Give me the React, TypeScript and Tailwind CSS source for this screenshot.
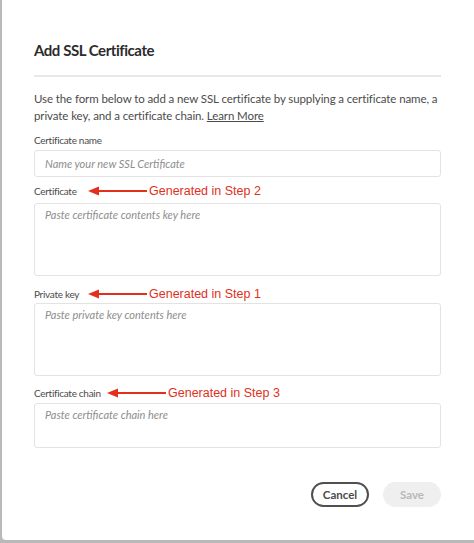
import type { ReactNode } from 'react';

const font = { fontFamily: 'Lato, "Open Sans", sans-serif' };

function Arrow({ width }: { width: number }) {
  return (
    <svg width={width} height="10" viewBox={`0 0 ${width} 10`} className="shrink-0">
      <line x1="8" y1="5" x2={width} y2="5" stroke="#e3301c" strokeWidth="2" />
      <polygon points="0,5 11,0.5 11,9.5" fill="#e3301c" />
    </svg>
  );
}

function Label({ children, note, labelWidth }: { children: ReactNode; note?: string; labelWidth?: number }) {
  return (
    <div className="flex h-[14px] items-center">
      <span className="shrink-0 text-[10px] tracking-[-0.3px] text-[#4b4b4b]" style={labelWidth ? { width: labelWidth } : undefined}>
        {children}
      </span>
      {note && (
        <div className="flex items-center">
          <Arrow width={59} />
          <span className="ml-[2px] text-[12.5px] text-[#e0301c] [font-family:'Liberation_Sans',Arial,sans-serif]">{note}</span>
        </div>
      )}
    </div>
  );
}

const boxCls =
  'block w-full resize-none rounded-[3px] border border-[#e3e3e3] bg-white px-[10px] text-[11px] text-[#4b4b4b] outline-none placeholder:italic placeholder:text-[#8e8e8e]';

export default function App() {
  return (
    <div className="flex h-[543px] w-[474px] flex-col bg-[#b9b9b9]" style={font}>
      <div className="ml-[2px] flex h-[540px] flex-col rounded-bl-[4px] bg-white pl-8 pr-[33px] pt-[40px]">
        <h1 className="text-[15px] font-bold leading-[20px] tracking-[-0.45px] text-[#2c2c2c]">Add SSL Certificate</h1>
        <div className="mt-[15px] h-[2px] bg-[#e8e8e8]" />
        <p className="mt-[13px] text-[11.5px] leading-[17px] tracking-[-0.1px] text-[#4b4b4b]">
          Use the form below to add a new SSL certificate by supplying a certificate name, a private key, and a certificate chain.{' '}
          <a className="text-[#4b4b4b] underline">Learn More</a>
        </p>

        <div className="mt-[9px]">
          <Label>Certificate name</Label>
        </div>
        <input className={`mt-[3px] h-[27px] ${boxCls}`} placeholder="Name your new SSL Certificate" />

        <div className="mt-[7px]">
          <Label note="Generated in Step 2" labelWidth={54}>Certificate</Label>
        </div>
        <textarea className={`mt-[5px] h-[73px] py-[4px] leading-[14px] ${boxCls}`} placeholder="Paste certificate contents key here" />

        <div className="mt-[11px]">
          <Label note="Generated in Step 1" labelWidth={54}>Private key</Label>
        </div>
        <textarea className={`mt-[2px] h-[73px] py-[4px] leading-[14px] ${boxCls}`} placeholder="Paste private key contents here" />

        <div className="mt-[10px]">
          <Label note="Generated in Step 3" labelWidth={73}>Certificate chain</Label>
        </div>
        <textarea className={`mt-[3px] h-[45px] py-[4px] leading-[14px] ${boxCls}`} placeholder="Paste certificate chain here" />

        <div className="mt-[34px] flex justify-end gap-[14px]">
          <button className="h-[25px] w-[58px] rounded-full border-2 border-[#505050] text-[11.5px] font-bold text-[#4b4b4b]">
            Cancel
          </button>
          <button className="h-[25px] w-[58px] rounded-full bg-[#efefef] text-[11.5px] font-bold text-[#b8b8b8]" disabled>
            Save
          </button>
        </div>
      </div>
    </div>
  );
}
